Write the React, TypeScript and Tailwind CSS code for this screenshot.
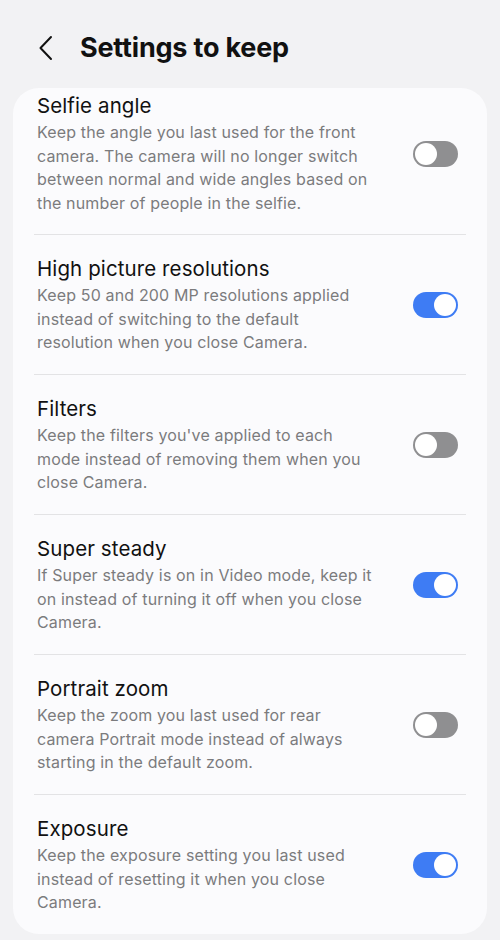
import { useState } from "react";

const SETTINGS = [
  {
    title: "Selfie angle",
    desc: "Keep the angle you last used for the front camera. The camera will no longer switch between normal and wide angles based on the number of people in the selfie.",
    on: false,
  },
  {
    title: "High picture resolutions",
    desc: "Keep 50 and 200 MP resolutions applied instead of switching to the default resolution when you close Camera.",
    on: true,
  },
  {
    title: "Filters",
    desc: "Keep the filters you've applied to each mode instead of removing them when you close Camera.",
    on: false,
  },
  {
    title: "Super steady",
    desc: "If Super steady is on in Video mode, keep it on instead of turning it off when you close Camera.",
    on: true,
  },
  {
    title: "Portrait zoom",
    desc: "Keep the zoom you last used for rear camera Portrait mode instead of always starting in the default zoom.",
    on: false,
  },
  {
    title: "Exposure",
    desc: "Keep the exposure setting you last used instead of resetting it when you close Camera.",
    on: true,
  },
];

const Toggle = ({ on, onClick }: { on: boolean; onClick: () => void }) => {
  return (
    <button
      onClick={onClick}
      className={`flex h-[26px] w-[45px] shrink-0 items-center rounded-full p-[2px] ${
        on ? "justify-end bg-[#3e7cf4]" : "justify-start bg-[#8f8f91]"
      }`}
    >
      <span className="h-[22px] w-[22px] rounded-full bg-white" />
    </button>
  );
};

const App = () => {
  const [values, setValues] = useState(SETTINGS.map((s) => s.on));

  return (
    <div
      className="min-h-[940px] w-full bg-[#f2f2f4] px-[13px]"
      style={{ fontFamily: "Inter, 'Noto Sans', sans-serif" }}
    >
      {/* HEADER */}
      <div className="flex h-[88px] items-start gap-[26px] pt-[32px] pl-[25px]">
        <svg width="16" height="26" viewBox="0 0 16 26" fill="none" className="mt-[3px]">
          <path d="M13 2 L2.5 13 L13 24" stroke="#111" strokeWidth="2" strokeLinecap="round" strokeLinejoin="round" />
        </svg>
        <h1 className="text-[27px] leading-[32px] font-bold tracking-[-0.2px] text-[#111]">
          Settings to keep
        </h1>
      </div>

      {/* LIST */}
      <div className="rounded-[26px] bg-[#fbfbfd] px-[21px]">
        {SETTINGS.map((s, i) => (
          <div
            key={s.title}
            className={`flex items-center pr-[8px] ${
              i === 0 ? "pt-[5px]" : "border-t border-[#e3e3e5] pt-[21px]"
            } ${i === SETTINGS.length - 1 ? "pb-[19px]" : i === 0 ? "pb-[19px]" : "pb-[19.5px]"}`}
          >
            <div className="flex-1 pl-[3px]">
              <div className="text-[20.5px] leading-[26px] tracking-[0.1px] text-[#111]">{s.title}</div>
              <div className="mt-[2px] w-[340px] text-[16px] leading-[23.5px] tracking-[0.15px] text-[#7b7b7d]">
                {s.desc}
              </div>
            </div>
            <Toggle
              on={values[i]}
              onClick={() => setValues(values.map((v, j) => (j === i ? !v : v)))}
            />
          </div>
        ))}
      </div>
    </div>
  );
};

export default App;
